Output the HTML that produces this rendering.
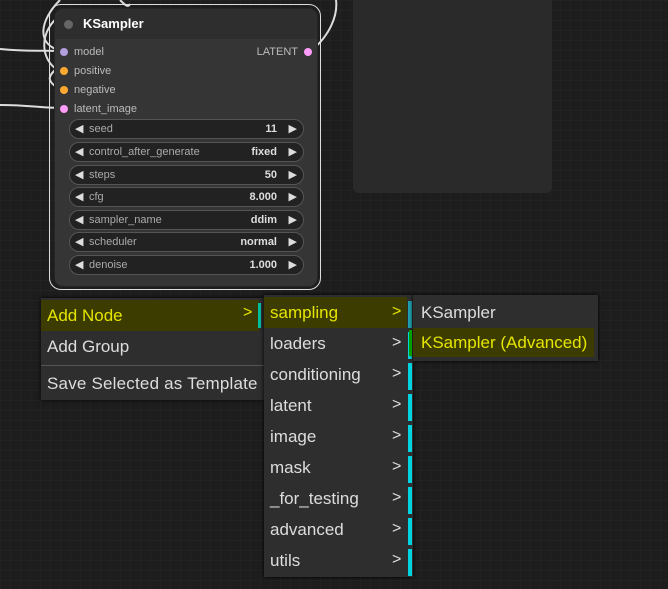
<!DOCTYPE html><html><head><style>
body{margin:0;width:668px;height:589px;overflow:hidden;background:#1d1d1d;font-family:"Liberation Sans",sans-serif;position:relative;
background-image:linear-gradient(#222 1px,transparent 1px),linear-gradient(90deg,#222 1px,transparent 1px);background-size:10px 10px}
.abs{position:absolute}
.node{left:55px;top:9px;width:262px;height:277px;background:#353535;border-radius:8px;box-shadow:0 0 0 1px #252525}
.sel{left:49px;top:4px;width:272px;height:286px;border:1.5px solid #ddd;border-radius:12px;box-sizing:border-box}
.title{left:0;top:0;width:262px;height:30px;background:#2e2e2e;border-radius:8px 8px 0 0;color:#fff;font-size:13px;line-height:30px;font-weight:bold}
.in{font-size:11px;color:#bbb;left:19px}
.dot{width:8px;height:8px;border-radius:50%;left:-14px;top:2px}
.w{left:14px;width:233px;height:18px;background:#222;border:1px solid #555;border-radius:10px;font-size:11px;color:#aaa;line-height:18px}
.w .l{left:5px;color:#ddd}.w .n{left:19px}.w .v{right:26px;color:#ddd;font-weight:bold}.w .r{right:6px;color:#ddd}
.menu{background:#2e2e2e;font-size:17px;color:#ddd;box-shadow:0 0 4px #000}
.it{height:31px;line-height:31px;left:6px}
.ar{color:#ddd;font-size:16px}
.bar{width:4px;height:27px;background:#00d4e0}
.hl{background:#3c3c00;color:#e5e500}
</style></head><body>
<svg class="abs" style="left:0;top:0" width="668" height="300"><g fill="none" stroke="#ddd" stroke-width="2">
<path d="M0 49 C30 52 40 50 60 51"/><path d="M0 105 C30 105 40 108 62 108"/>
<path d="M62 51 C35 45 40 20 60 0"/><path d="M58 70 C40 60 38 30 62 14"/><path d="M58 88 C45 80 50 75 55 70"/>
<path d="M120 0 C125 5 128 8 130 4"/><path d="M312 50 C330 35 338 15 336 0"/></g></svg>
<div class="abs" style="left:353px;top:0;width:199px;height:193px;background:#2a2a2a;border-radius:0 0 6px 6px"></div>
<div class="abs sel"></div>
<div class="abs node">
<div class="abs title"><span class="abs" style="left:9px;top:11px;width:9px;height:9px;border-radius:50%;background:#666"></span><span class="abs" style="left:28px">KSampler</span></div>
<div class="abs in" style="top:37px"><span class="abs dot" style="background:#b39ddb"></span>model</div>
<div class="abs" style="right:19px;top:37px;font-size:11px;color:#bbb">LATENT<span class="abs dot" style="background:#ff9cf9;left:auto;right:-14px"></span></div>
<div class="abs in" style="top:56px"><span class="abs dot" style="background:#ffa931"></span>positive</div>
<div class="abs in" style="top:75px"><span class="abs dot" style="background:#ffa931"></span>negative</div>
<div class="abs in" style="top:94px"><span class="abs dot" style="background:#ff9cf9"></span>latent_image</div>
<div class="abs w" style="top:110px"><span class="abs l">◀</span><span class="abs n">seed</span><span class="abs v">11</span><span class="abs r">▶</span></div>
<div class="abs w" style="top:133px"><span class="abs l">◀</span><span class="abs n">control_after_generate</span><span class="abs v">fixed</span><span class="abs r">▶</span></div>
<div class="abs w" style="top:156px"><span class="abs l">◀</span><span class="abs n">steps</span><span class="abs v">50</span><span class="abs r">▶</span></div>
<div class="abs w" style="top:178px"><span class="abs l">◀</span><span class="abs n">cfg</span><span class="abs v">8.000</span><span class="abs r">▶</span></div>
<div class="abs w" style="top:201px"><span class="abs l">◀</span><span class="abs n">sampler_name</span><span class="abs v">ddim</span><span class="abs r">▶</span></div>
<div class="abs w" style="top:223px"><span class="abs l">◀</span><span class="abs n">scheduler</span><span class="abs v">normal</span><span class="abs r">▶</span></div>
<div class="abs w" style="top:246px"><span class="abs l">◀</span><span class="abs n">denoise</span><span class="abs v">1.000</span><span class="abs r">▶</span></div>
</div>
<div class="abs menu" style="left:41px;top:298px;width:223px;height:102px">
<div class="abs hl" style="left:0;top:2px;width:218px;height:31px"></div>
<div class="abs it" style="top:2px;color:#e5e500">Add Node</div><div class="abs ar" style="left:202px;top:6px;color:#e5e500">&gt;</div>
<div class="abs" style="left:217px;top:5px;width:3px;height:25px;background:#00c0a0"></div>
<div class="abs it" style="top:33px">Add Group</div>
<div class="abs" style="left:0;top:67px;width:223px;height:1px;background:#555"></div>
<div class="abs it" style="top:70px;letter-spacing:0.2px">Save Selected as Template</div>
</div>
<div class="abs menu" style="left:264px;top:295px;width:149px;height:282px">
<div class="abs hl" style="left:0;top:2px;width:143px;height:31px"></div>
<div class="abs it" style="top:2px;color:#e5e500">sampling</div>
<div class="abs it" style="top:33px">loaders</div><div class="abs it" style="top:64px">conditioning</div>
<div class="abs it" style="top:95px">latent</div><div class="abs it" style="top:126px">image</div>
<div class="abs it" style="top:157px">mask</div><div class="abs it" style="top:188px">_for_testing</div>
<div class="abs it" style="top:219px">advanced</div><div class="abs it" style="top:250px">utils</div>
<div class="abs ar" style="left:128px;top:8px;color:#e5e500">&gt;</div>
<div class="abs ar" style="left:128px;top:39px">&gt;</div><div class="abs ar" style="left:128px;top:70px">&gt;</div>
<div class="abs ar" style="left:128px;top:101px">&gt;</div><div class="abs ar" style="left:128px;top:132px">&gt;</div>
<div class="abs ar" style="left:128px;top:163px">&gt;</div><div class="abs ar" style="left:128px;top:194px">&gt;</div>
<div class="abs ar" style="left:128px;top:225px">&gt;</div><div class="abs ar" style="left:128px;top:256px">&gt;</div>
<div class="abs bar" style="left:144px;top:6px;background:#20a0b0"></div>
<div class="abs bar" style="left:144px;top:37px"></div><div class="abs bar" style="left:144px;top:68px"></div>
<div class="abs bar" style="left:144px;top:99px"></div><div class="abs bar" style="left:144px;top:130px"></div>
<div class="abs bar" style="left:144px;top:161px"></div><div class="abs bar" style="left:144px;top:192px"></div>
<div class="abs bar" style="left:144px;top:223px"></div><div class="abs bar" style="left:144px;top:254px"></div>
</div>
<div class="abs menu" style="left:413px;top:295px;width:185px;height:66px">
<div class="abs it" style="top:2px;left:8px">KSampler</div>
<div class="abs hl" style="left:0;top:33px;width:181px;height:29px"></div>
<div class="abs" style="left:-4px;top:35px;width:3px;height:26px;background:#00a000"></div>
<div class="abs it" style="top:32px;left:8px;color:#e5e500">KSampler (Advanced)</div>
</div>
</body></html>
